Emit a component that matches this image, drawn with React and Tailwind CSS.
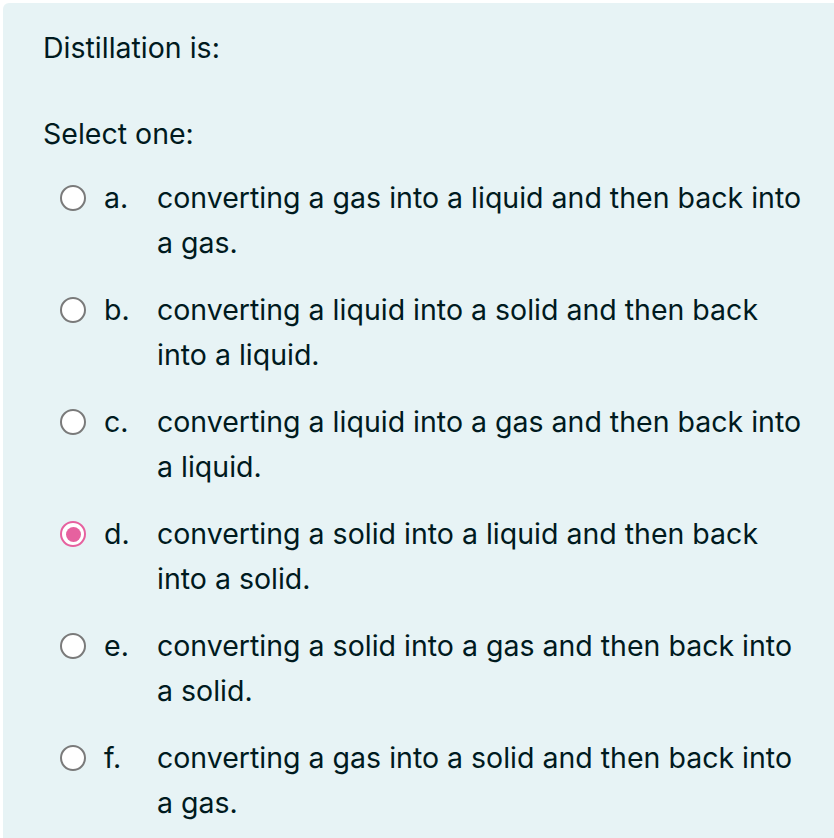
import React, { useState } from 'react'

const options = [
  { key: 'a', lines: ['converting a gas into a liquid and then back into', 'a gas.'] },
  { key: 'b', lines: ['converting a liquid into a solid and then back', 'into a liquid.'] },
  { key: 'c', lines: ['converting a liquid into a gas and then back into', 'a liquid.'] },
  { key: 'd', lines: ['converting a solid into a liquid and then back', 'into a solid.'] },
  { key: 'e', lines: ['converting a solid into a gas and then back into', 'a solid.'] },
  { key: 'f', lines: ['converting a gas into a solid and then back into', 'a gas.'] },
]

// radio circle, grey ring or pink checked dot
const Radio = ({ checked }) => (
  <span
    className={
      checked
        ? 'flex h-[26px] w-[26px] shrink-0 items-center justify-center rounded-full border-[2px] border-[#e6619f] bg-white'
        : 'flex h-[26px] w-[26px] shrink-0 items-center justify-center rounded-full border-[2px] border-[#7a7a7a] bg-white'
    }
  >
    {checked && <span className="h-[15px] w-[15px] rounded-full bg-[#e6619f]" />}
  </span>
)

export default function App() {
  const [picked, setPicked] = useState('d')

  return (
    <div className="min-h-screen bg-white pl-[3px] pt-[3px] font-['Inter','Liberation_Sans',sans-serif] text-[28.5px] leading-[45px] text-[#001a1e]">
      <div className="min-h-[835px] rounded-tl-[6px] bg-[#e7f3f5] pl-[40px] pr-[20px] pt-[22px]">
        <p>Distillation is:</p>
        <p className="mt-[41px]">Select one:</p>
        <div className="mt-[19px] flex flex-col gap-[22px]">
          {options.map((o) => (
            <label
              key={o.key}
              className="flex cursor-pointer items-start"
              onClick={() => setPicked(o.key)}
            >
              <span className="flex h-[45px] w-[43px] shrink-0 items-center justify-end pt-[1px]">
                <Radio checked={picked === o.key} />
              </span>
              <span className="ml-[18px] w-[53px] shrink-0">{o.key}.</span>
              <span className="flex flex-col whitespace-nowrap">
                {o.lines.map((l) => (
                  <span key={l}>{l}</span>
                ))}
              </span>
            </label>
          ))}
        </div>
      </div>
    </div>
  )
}
